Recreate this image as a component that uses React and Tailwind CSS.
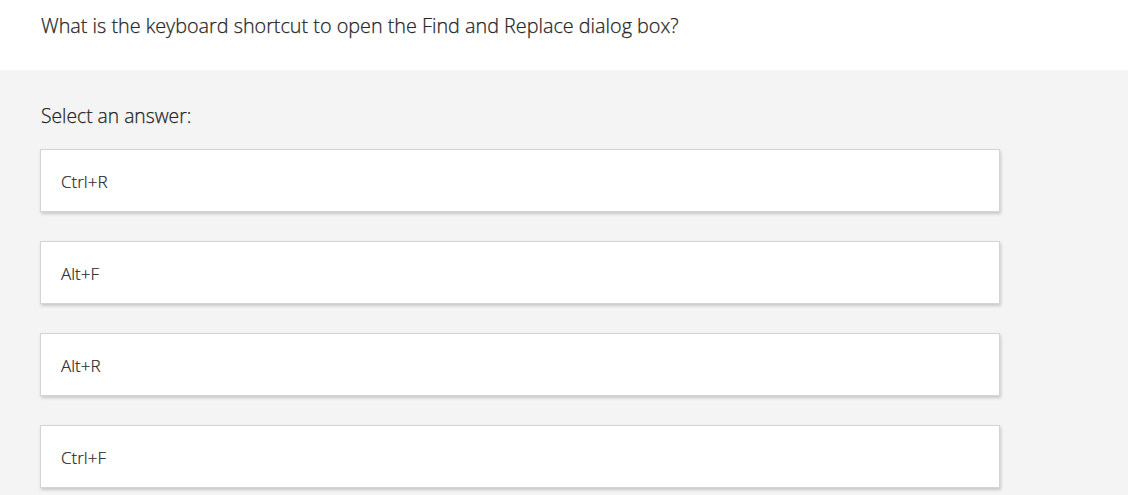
const options = ['Ctrl+R', 'Alt+F', 'Alt+R', 'Ctrl+F'];

export default function App() {
  return (
    <div className="min-h-screen bg-[#f4f4f4] text-[#262626]" style={{ fontFamily: '"Open Sans", "Noto Sans", sans-serif' }}>
      {/* Question */}
      <div className="bg-white h-[70px] px-[41px] pt-[12px]">
        <h1 className="text-[19.8px] leading-[28px] font-light [-webkit-text-stroke:0.25px_#262626]">
          What is the keyboard shortcut to open the Find and Replace dialog box?
        </h1>
      </div>

      {/* Answers */}
      <div className="px-[40px] pt-[33px]">
        <p className="text-[19.25px] leading-[26px] pl-px font-light [-webkit-text-stroke:0.25px_#262626]">Select an answer:</p>
        <div className="flex flex-col gap-[29px] mt-[20px] w-[960px]">
          {options.map((opt) => (
            <div
              key={opt}
              className="h-[63px] bg-white border border-[#d4d4d4] shadow-[1px_2px_3px_rgba(0,0,0,0.18)] flex items-center px-[20px] pt-[3px]"
            >
              <span className="text-[17px] font-light [-webkit-text-stroke:0.2px_#262626]">{opt}</span>
            </div>
          ))}
        </div>
      </div>
    </div>
  );
}
